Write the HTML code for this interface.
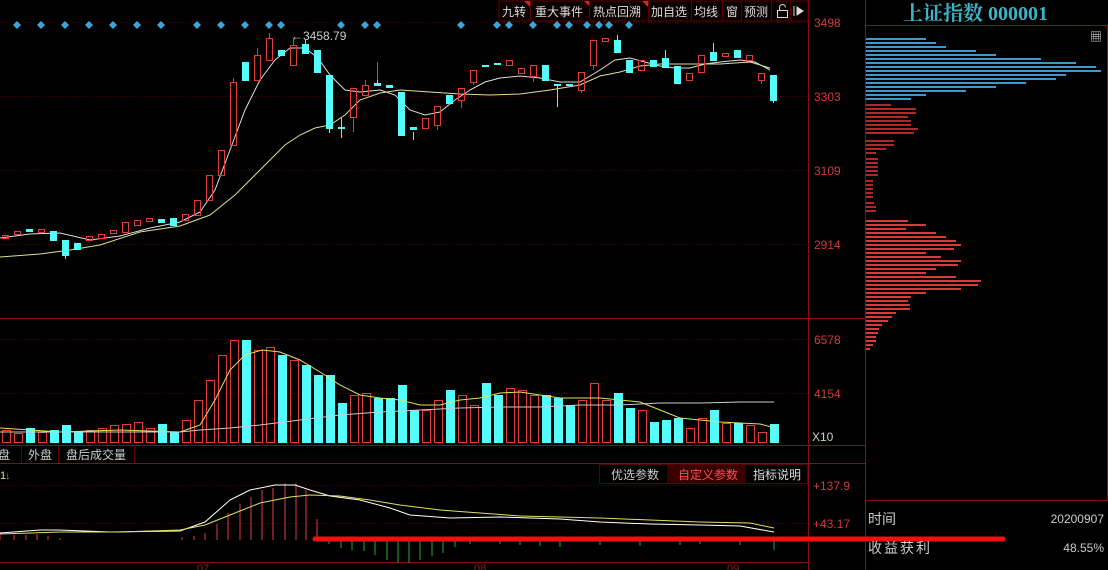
<!DOCTYPE html>
<html><head><meta charset="utf-8"><style>
html,body{margin:0;padding:0;background:#000;width:1108px;height:570px;overflow:hidden}
svg{display:block}
text{font-family:"Liberation Sans","Noto Sans CJK SC",sans-serif}
</style></head><body>
<svg width="1108" height="570" viewBox="0 0 1108 570" xmlns="http://www.w3.org/2000/svg">
<rect width="1108" height="570" fill="#000"/>
<g stroke="#5a0000" stroke-width="1" stroke-dasharray="1,2">
<line x1="0" y1="22.5" x2="808" y2="22.5"/><line x1="0" y1="96.5" x2="808" y2="96.5"/>
<line x1="0" y1="170.5" x2="808" y2="170.5"/><line x1="0" y1="244.5" x2="808" y2="244.5"/>
<line x1="0" y1="339.5" x2="808" y2="339.5"/><line x1="0" y1="393.5" x2="808" y2="393.5"/>
<line x1="0" y1="485.5" x2="808" y2="485.5"/><line x1="0" y1="523.5" x2="808" y2="523.5"/>
</g>
<g stroke="#8a0c0c" stroke-width="1" fill="none">
<line x1="808.5" y1="0" x2="808.5" y2="570"/>
<line x1="865.5" y1="0" x2="865.5" y2="570"/>
<line x1="0" y1="318.5" x2="865" y2="318.5"/>
<line x1="0" y1="445.5" x2="865" y2="445.5"/>
<line x1="0" y1="463.5" x2="865" y2="463.5"/>
<line x1="0" y1="562.5" x2="808" y2="562.5"/>
<rect x="865.5" y="25.5" width="242" height="475"/>
<line x1="865" y1="500.5" x2="1108" y2="500.5"/>
</g>
<g font-size="12" fill="#ddd">
<rect x="499" y="1" width="309" height="20" fill="#0a0000" stroke="#5a0000"/>
<text x="502" y="16">九转</text><text x="535" y="16">重大事件</text><text x="593" y="16">热点回溯</text>
<text x="651" y="16">加自选</text><text x="694" y="16">均线</text><text x="726" y="16">窗</text><text x="744" y="16">预测</text>
</g>
<path d="M777.5 17.5v-7h10v7zM779.5 10.5v-3a3 3 0 0 1 6 0" fill="none" stroke="#ddd"/>
<path d="M794 6v10M797 7l6 4-6 4z" stroke="#ddd" fill="#ddd"/>
<g fill="#e02020"><path d="M524 1h6v6z"/><path d="M584 1h6v6z"/><path d="M642 1h6v6z"/></g>
<g stroke="#5a0000"><line x1="530.5" y1="1" x2="530.5" y2="21"/><line x1="589.5" y1="1" x2="589.5" y2="21"/><line x1="648.5" y1="1" x2="648.5" y2="21"/><line x1="691.5" y1="1" x2="691.5" y2="21"/><line x1="722.5" y1="1" x2="722.5" y2="21"/><line x1="741.5" y1="1" x2="741.5" y2="21"/><line x1="771.5" y1="1" x2="771.5" y2="21"/><line x1="790.5" y1="1" x2="790.5" y2="21"/></g>
<g font-size="12" fill="#d23a3a">
<text x="814" y="27">3498</text><text x="814" y="101">3303</text><text x="814" y="175">3109</text><text x="814" y="249">2914</text>
<text x="814" y="344">6578</text><text x="814" y="398">4154</text>
<text x="813" y="490">+137.9</text><text x="813" y="528">+43.17</text>
</g>
<text x="812" y="441" font-size="12" fill="#ccc">X10</text>
<text x="903" y="20" fill="#3ab4c8" style="font-family:'Liberation Serif','Noto Serif CJK SC',serif;font-size:20px;font-weight:bold">上证指数 000001</text>
<text x="1090" y="41" font-size="12" fill="#ddd">▦</text>
<g fill="#3aa6d8">
<path d="M17 21l4 4-4 4-4-4z"/><path d="M41 21l4 4-4 4-4-4z"/><path d="M65 21l4 4-4 4-4-4z"/><path d="M89 21l4 4-4 4-4-4z"/><path d="M113 21l4 4-4 4-4-4z"/><path d="M137 21l4 4-4 4-4-4z"/><path d="M161 21l4 4-4 4-4-4z"/><path d="M197 21l4 4-4 4-4-4z"/><path d="M221 21l4 4-4 4-4-4z"/><path d="M245 21l4 4-4 4-4-4z"/><path d="M269 21l4 4-4 4-4-4z"/><path d="M281 21l4 4-4 4-4-4z"/><path d="M341 21l4 4-4 4-4-4z"/><path d="M365 21l4 4-4 4-4-4z"/><path d="M377 21l4 4-4 4-4-4z"/><path d="M461 21l4 4-4 4-4-4z"/><path d="M497 21l4 4-4 4-4-4z"/><path d="M509 21l4 4-4 4-4-4z"/><path d="M533 21l4 4-4 4-4-4z"/><path d="M557 21l4 4-4 4-4-4z"/><path d="M569 21l4 4-4 4-4-4z"/><path d="M587 21l4 4-4 4-4-4z"/><path d="M599 21l4 4-4 4-4-4z"/><path d="M609 21l4 4-4 4-4-4z"/><path d="M629 21l4 4-4 4-4-4z"/>
</g>
<text x="291" y="40" font-size="12" fill="#ccc">←3458.79</text>
<polyline fill="none" stroke="#ddd" stroke-width="1" points="0,238 30,234 60,233 90,240 120,236 150,228 180,222 200,212 215,190 230,150 245,110 260,80 275,60 290,48 305,48 318,58 330,75 345,90 360,92 380,90 395,95 410,110 425,115 440,112 455,100 470,90 485,82 500,78 520,76 540,78 560,82 580,82 600,70 615,60 630,58 645,62 660,66 675,68 690,68 705,64 720,62 740,60 755,62 770,70"/>
<polyline fill="none" stroke="#e0e090" stroke-width="1" points="0,257 40,254 70,250 100,245 140,232 180,226 210,215 235,195 255,175 270,160 285,145 300,135 315,128 330,125 345,115 360,100 380,93 400,90 430,92 460,94 490,95 520,94 550,90 580,85 600,76 620,72 640,66 660,64 690,64 720,64 750,62 770,68"/>
<g stroke="#e03c3c" fill="none" stroke-width="1">
<rect x="2.5" y="235.5" width="6" height="3"/><rect x="14.5" y="231.5" width="6" height="3"/><rect x="38.5" y="229.5" width="6" height="3"/>
<rect x="86.5" y="236.5" width="6" height="4"/><rect x="98.5" y="234.5" width="6" height="4"/><rect x="110.5" y="230.5" width="6" height="3"/>
<rect x="122.5" y="222.5" width="6" height="10"/><rect x="134.5" y="220.5" width="6" height="5"/><rect x="146.5" y="218.5" width="6" height="3"/>
<rect x="182.5" y="214.5" width="6" height="6"/><rect x="194.5" y="200.5" width="6" height="15"/><rect x="206.5" y="175.5" width="6" height="25"/>
<rect x="218.5" y="150.5" width="6" height="25"/><rect x="230.5" y="82.5" width="6" height="63"/><rect x="254.5" y="55.5" width="6" height="25"/>
<rect x="266.5" y="38.5" width="6" height="22"/><rect x="290.5" y="45.5" width="6" height="20"/><rect x="350.5" y="88.5" width="6" height="29"/>
<rect x="362.5" y="85.5" width="6" height="10"/><rect x="422.5" y="118.5" width="6" height="10"/><rect x="434.5" y="106.5" width="6" height="19"/>
<rect x="458.5" y="88.5" width="6" height="12"/><rect x="470.5" y="70.5" width="6" height="12"/><rect x="506.5" y="60.5" width="6" height="5"/>
<rect x="518.5" y="68.5" width="6" height="5"/><rect x="530.5" y="65.5" width="6" height="11"/><rect x="578.5" y="72.5" width="6" height="18"/>
<rect x="590.5" y="40.5" width="6" height="25"/><rect x="602.5" y="38.5" width="6" height="3"/><rect x="638.5" y="60.5" width="6" height="10"/>
<rect x="686.5" y="73.5" width="6" height="7"/><rect x="698.5" y="55.5" width="6" height="17"/><rect x="722.5" y="53.5" width="6" height="3"/>
<rect x="746.5" y="55.5" width="6" height="5"/><rect x="758.5" y="73.5" width="6" height="7"/>
<path d="M233.5 78v4M257.5 48v7M269.5 33v5M293.5 38v7M353.5 117v15M365.5 80v5M377.5 62v23M437.5 125v5M461.5 100v8M473.5 82v3M533.5 76v6M581.5 90v3M593.5 65v5M761.5 80v4"/>
</g>
<g fill="#54fcfc" stroke="#54fcfc" stroke-width="1">
<rect x="26.5" y="229.5" width="6" height="2"/><rect x="50.5" y="231.5" width="6" height="9"/><rect x="62.5" y="240.5" width="6" height="15"/>
<rect x="74.5" y="243.5" width="6" height="6"/><rect x="158.5" y="219.5" width="6" height="3"/><rect x="170.5" y="218.5" width="6" height="7"/>
<rect x="242.5" y="62.5" width="6" height="18"/><rect x="278.5" y="50.5" width="6" height="5"/><rect x="302.5" y="44.5" width="6" height="9"/>
<rect x="314.5" y="50.5" width="6" height="22"/><rect x="326.5" y="75.5" width="6" height="53"/><rect x="338.5" y="127.5" width="6" height="1"/>
<rect x="374.5" y="83.5" width="6" height="2"/><rect x="386.5" y="85.5" width="6" height="2"/><rect x="398.5" y="92.5" width="6" height="43"/>
<rect x="410.5" y="127.5" width="6" height="2"/><rect x="446.5" y="95.5" width="6" height="8"/><rect x="482.5" y="65.5" width="6" height="1"/>
<rect x="494.5" y="63.5" width="6" height="1"/><rect x="542.5" y="65.5" width="6" height="15"/><rect x="554.5" y="84.5" width="6" height="1"/>
<rect x="566.5" y="84.5" width="6" height="1"/><rect x="614.5" y="40.5" width="6" height="12"/><rect x="626.5" y="60.5" width="6" height="12"/>
<rect x="650.5" y="60.5" width="6" height="6"/><rect x="662.5" y="58.5" width="6" height="9"/><rect x="674.5" y="66.5" width="6" height="17"/>
<rect x="710.5" y="52.5" width="6" height="8"/><rect x="734.5" y="50.5" width="6" height="7"/><rect x="770.5" y="75.5" width="6" height="25"/>
<path d="M65.5 255v4M305.5 40v4M341.5 118v20M377.5 80v3M329.5 128v5M413.5 132v8M557.5 85v22M617.5 35v5M665.5 50v8M713.5 43v9M773.5 100v3" fill="none"/>
</g>
<g stroke="#e03c3c" fill="none">
<rect x="2.5" y="430.5" width="8" height="12"/><rect x="14.5" y="433.5" width="8" height="9"/><rect x="38.5" y="432.5" width="8" height="10"/>
<rect x="86.5" y="430.5" width="8" height="12"/><rect x="98.5" y="428.5" width="8" height="14"/><rect x="110.5" y="425.5" width="8" height="17"/>
<rect x="122.5" y="424.5" width="8" height="18"/><rect x="134.5" y="422.5" width="8" height="20"/><rect x="146.5" y="428.5" width="8" height="14"/>
<rect x="182.5" y="420.5" width="8" height="22"/><rect x="194.5" y="400.5" width="8" height="42"/><rect x="206.5" y="380.5" width="8" height="62"/>
<rect x="218.5" y="355.5" width="8" height="87"/><rect x="230.5" y="340.5" width="8" height="102"/><rect x="254.5" y="350.5" width="8" height="92"/>
<rect x="266.5" y="347.5" width="8" height="95"/><rect x="290.5" y="360.5" width="8" height="82"/><rect x="350.5" y="395.5" width="8" height="47"/>
<rect x="362.5" y="393.5" width="8" height="49"/><rect x="422.5" y="410.5" width="8" height="32"/><rect x="434.5" y="400.5" width="8" height="42"/>
<rect x="458.5" y="395.5" width="8" height="47"/><rect x="470.5" y="405.5" width="8" height="37"/><rect x="506.5" y="388.5" width="8" height="54"/>
<rect x="518.5" y="390.5" width="8" height="52"/><rect x="530.5" y="395.5" width="8" height="47"/><rect x="578.5" y="400.5" width="8" height="42"/>
<rect x="590.5" y="383.5" width="8" height="59"/><rect x="602.5" y="400.5" width="8" height="42"/><rect x="638.5" y="410.5" width="8" height="32"/>
<rect x="686.5" y="428.5" width="8" height="14"/><rect x="698.5" y="418.5" width="8" height="24"/><rect x="722.5" y="423.5" width="8" height="19"/>
<rect x="746.5" y="425.5" width="8" height="17"/><rect x="758.5" y="432.5" width="8" height="10"/>
</g>
<g fill="#54fcfc">
<rect x="26" y="428" width="9" height="15"/><rect x="50" y="430" width="9" height="13"/><rect x="62" y="425" width="9" height="18"/>
<rect x="74" y="432" width="9" height="11"/><rect x="158" y="424" width="9" height="19"/><rect x="170" y="432" width="9" height="11"/>
<rect x="242" y="340" width="9" height="103"/><rect x="278" y="355" width="9" height="88"/><rect x="302" y="365" width="9" height="78"/>
<rect x="314" y="375" width="9" height="68"/><rect x="326" y="375" width="9" height="68"/><rect x="338" y="403" width="9" height="40"/>
<rect x="374" y="398" width="9" height="45"/><rect x="386" y="398" width="9" height="45"/><rect x="398" y="385" width="9" height="58"/>
<rect x="410" y="410" width="9" height="33"/><rect x="446" y="390" width="9" height="53"/><rect x="482" y="383" width="9" height="60"/>
<rect x="494" y="395" width="9" height="48"/><rect x="542" y="395" width="9" height="48"/><rect x="554" y="398" width="9" height="45"/>
<rect x="566" y="405" width="9" height="38"/><rect x="614" y="393" width="9" height="50"/><rect x="626" y="408" width="9" height="35"/>
<rect x="650" y="422" width="9" height="21"/><rect x="662" y="420" width="9" height="23"/><rect x="674" y="418" width="9" height="25"/>
<rect x="710" y="410" width="9" height="33"/><rect x="734" y="423" width="9" height="20"/><rect x="770" y="424" width="9" height="19"/>
</g>
<polyline fill="none" stroke="#e0e060" points="0,428 60,432 120,430 180,432 200,425 215,400 230,370 245,355 262,350 280,352 300,360 320,372 340,385 360,395 380,398 400,400 420,405 440,405 460,400 480,398 500,393 520,392 540,395 560,398 580,398 600,398 620,400 640,402 660,410 680,418 700,420 720,422 740,423 760,424 775,428"/>
<polyline fill="none" stroke="#ccc" points="0,432 100,432 180,432 200,430 230,428 260,425 300,420 340,415 380,412 420,410 460,408 500,407 540,407 580,405 620,405 660,403 700,403 740,402 774,402"/>
<g font-size="12" fill="#ccc"><text x="-2" y="459">盘</text><text x="28" y="459">外盘</text><text x="66" y="459">盘后成交量</text></g>
<g stroke="#5a0000"><line x1="21.5" y1="446" x2="21.5" y2="463"/><line x1="58.5" y1="446" x2="58.5" y2="463"/><line x1="134.5" y1="446" x2="134.5" y2="463"/></g>
<text x="0" y="479" font-size="11" fill="#e0e060">1</text><text x="5" y="479" font-size="11" fill="#3aa6d8">↓</text>
<rect x="599.5" y="464.5" width="208" height="19" fill="none" stroke="#5a0000"/>
<rect x="667" y="465" width="79" height="18" fill="#3a0000"/>
<g font-size="12"><text x="611" y="479" fill="#ccc">优选参数</text><text x="678" y="479" fill="#ff5050">自定义参数</text><text x="753" y="479" fill="#ddd">指标说明</text></g>
<g stroke="#e03c3c">
<path d="M0 540v-5M14 540v-5M26 540v-5M37 540v-6M48 540v-4M60 540v-2M182 540v-3M194 540v-4M205 540v-7M217 540v-16M228 540v-27M240 540v-36M251 540v-43M262 540v-50M273 540v-52M285 540v-57M296 540v-57M306 540v-50M317 540v-21"/>
</g>
<g stroke="#2ea82e">
<path d="M329 541v3M341 541v7M352 541v9M364 541v10M375 541v14M387 541v19M398 541v22M409 541v22M420 541v19M432 541v15M443 541v12M455 541v6M470 541v3M500 541v3M520 541v4M540 541v5M560 541v6M600 541v4M640 541v5M680 541v4M700 541v3M740 541v4M774 541v9"/>
</g>
<polyline fill="none" stroke="#fff" points="0,533 40,530 60,530 110,532 180,531 205,522 230,500 250,490 275,485 295,485 310,490 330,496 360,500 390,508 410,515 450,518 500,517 560,519 600,522 650,524 700,525 740,526 774,532"/>
<polyline fill="none" stroke="#e0e060" points="0,534 60,532 120,532 180,530 205,525 230,515 260,503 290,497 310,495 340,496 370,500 400,505 440,510 480,513 520,516 560,517 600,518 650,520 700,522 750,523 774,528"/>
<line x1="315" y1="539" x2="1003" y2="539" stroke="#f01010" stroke-width="5" stroke-linecap="round"/>
<g fill="#3a9ad0">
<rect x="866" y="38" width="60" height="2"/><rect x="866" y="42" width="70" height="2"/><rect x="866" y="46" width="80" height="2"/><rect x="866" y="50" width="110" height="2"/>
<rect x="866" y="54" width="130" height="2"/><rect x="866" y="58" width="175" height="2"/><rect x="866" y="62" width="210" height="2"/><rect x="866" y="66" width="230" height="2"/>
<rect x="866" y="70" width="235" height="2"/><rect x="866" y="74" width="200" height="2"/><rect x="866" y="78" width="190" height="2"/><rect x="866" y="82" width="160" height="2"/>
<rect x="866" y="86" width="130" height="2"/><rect x="866" y="90" width="100" height="2"/><rect x="866" y="94" width="60" height="2"/><rect x="866" y="98" width="45" height="2"/>
</g>
<g fill="#b02828">
<rect x="866" y="104" width="25" height="2"/><rect x="866" y="108" width="50" height="2"/><rect x="866" y="112" width="50" height="2"/><rect x="866" y="116" width="42" height="2"/>
<rect x="866" y="120" width="45" height="2"/><rect x="866" y="124" width="45" height="2"/><rect x="866" y="128" width="52" height="2"/><rect x="866" y="132" width="48" height="2"/>
<rect x="866" y="140" width="28" height="2"/><rect x="866" y="144" width="28" height="2"/><rect x="866" y="148" width="20" height="2"/><rect x="866" y="152" width="10" height="2"/>
<rect x="866" y="158" width="12" height="2"/><rect x="866" y="162" width="12" height="2"/><rect x="866" y="166" width="12" height="2"/><rect x="866" y="170" width="12" height="2"/><rect x="866" y="174" width="12" height="2"/>
<rect x="866" y="180" width="7" height="2"/><rect x="866" y="184" width="7" height="2"/><rect x="866" y="188" width="7" height="2"/><rect x="866" y="192" width="7" height="2"/><rect x="866" y="196" width="7" height="2"/>
<rect x="866" y="202" width="8" height="2"/><rect x="866" y="206" width="10" height="2"/><rect x="866" y="210" width="10" height="2"/>
</g>
<g fill="#d83a3a">
<rect x="866" y="220" width="42" height="2"/><rect x="866" y="224" width="60" height="2"/><rect x="866" y="228" width="40" height="2"/><rect x="866" y="232" width="70" height="2"/>
<rect x="866" y="236" width="80" height="2"/><rect x="866" y="240" width="90" height="2"/><rect x="866" y="244" width="95" height="2"/><rect x="866" y="248" width="88" height="2"/>
<rect x="866" y="252" width="60" height="2"/><rect x="866" y="256" width="75" height="2"/><rect x="866" y="260" width="95" height="2"/><rect x="866" y="264" width="92" height="2"/>
<rect x="866" y="268" width="70" height="2"/><rect x="866" y="272" width="60" height="2"/><rect x="866" y="276" width="90" height="2"/><rect x="866" y="280" width="115" height="2"/>
<rect x="866" y="284" width="112" height="2"/><rect x="866" y="288" width="95" height="2"/><rect x="866" y="292" width="60" height="2"/><rect x="866" y="296" width="45" height="2"/>
<rect x="866" y="300" width="42" height="2"/><rect x="866" y="304" width="44" height="2"/><rect x="866" y="308" width="44" height="2"/><rect x="866" y="312" width="30" height="2"/>
<rect x="866" y="316" width="26" height="2"/><rect x="866" y="320" width="22" height="2"/><rect x="866" y="324" width="16" height="2"/><rect x="866" y="328" width="13" height="2"/>
<rect x="866" y="332" width="12" height="2"/><rect x="866" y="336" width="10" height="2"/><rect x="866" y="340" width="10" height="2"/><rect x="866" y="344" width="7" height="2"/><rect x="866" y="348" width="4" height="2"/>
</g>
<g font-size="14" fill="#ccc"><text x="868" y="524">时间</text><text x="868" y="553" letter-spacing="2">收益获利</text></g>
<g font-size="12" fill="#ccc"><text x="1104" y="523" text-anchor="end">20200907</text><text x="1104" y="552" text-anchor="end">48.55%</text></g>
<g font-size="11" fill="#8a2020"><text x="197" y="572">07</text><text x="474" y="572">08</text><text x="727" y="572">09</text></g>
</svg>
</body></html>
